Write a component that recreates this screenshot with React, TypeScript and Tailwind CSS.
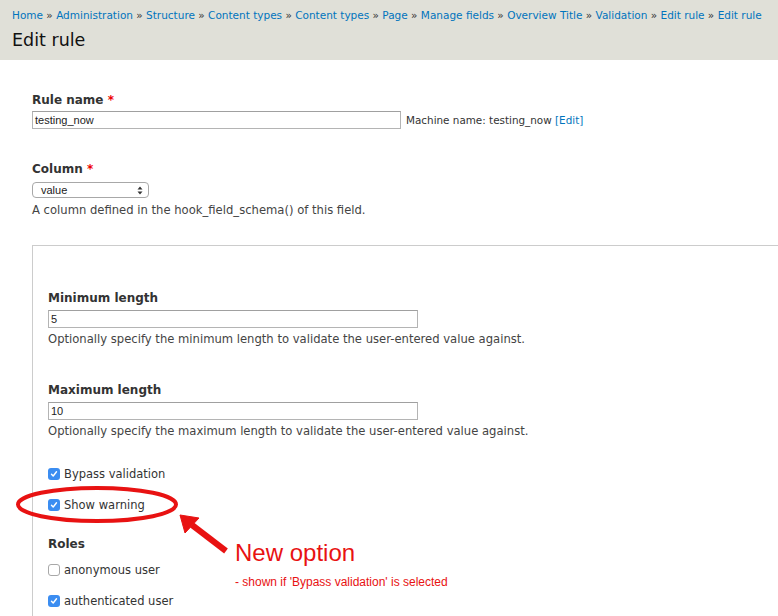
const crumbs = [
  "Home",
  "Administration",
  "Structure",
  "Content types",
  "Content types",
  "Page",
  "Manage fields",
  "Overview Title",
  "Validation",
  "Edit rule",
  "Edit rule",
];

const font = { fontFamily: '"DejaVu Sans", Verdana, sans-serif' };
const arial = { fontFamily: '"Liberation Sans", Arial, sans-serif' };

function Check({ on }: { on: boolean }) {
  if (!on) {
    return <span className="inline-block w-[12px] h-[12px] rounded-[3px] border border-[#a8a8a8] bg-white" />;
  }
  return (
    <span className="inline-flex items-center justify-center w-[12px] h-[12px] rounded-[3px] bg-[#3b8df1]">
      <svg width="8" height="8" viewBox="0 0 8 8">
        <path d="M1.5 4.2 L3.2 6 L6.5 1.8" fill="none" stroke="#fff" strokeWidth="1.4" strokeLinecap="round" strokeLinejoin="round" />
      </svg>
    </span>
  );
}

function Row({ on, label, className }: { on: boolean; label: string; className: string }) {
  return (
    <div className={`flex items-center gap-[4px] text-[11.5px] leading-[16px] text-[#333] ${className}`}>
      <Check on={on} />
      <span>{label}</span>
    </div>
  );
}

function TextField({ value, w }: { value: string; w: string }) {
  return (
    <div className={`${w} h-[18px] border border-[#b4b4b4] border-t-[#a0a0a0] bg-white text-[11px] leading-[16px] pl-[2px] text-[#222]`} style={arial}>
      {value}
    </div>
  );
}

export default function App() {
  return (
    <div className="relative w-[778px] h-[616px] overflow-hidden bg-white" style={font}>
      <div className="bg-[#e0e0d8] h-[60px] px-3 pt-[7px]">
        <div className="text-[10.5px] leading-[16px] text-[#0074bd] whitespace-nowrap">
          {crumbs.map((c, i) => (
            <span key={i}>
              {i > 0 && <span className="text-[#333]"> » </span>}
              {c}
            </span>
          ))}
        </div>
        <h1 className="text-[17.5px] leading-[24px] mt-[5px] text-[#111]">Edit rule</h1>
      </div>

      <div className="px-8 pt-[32px]">
        <div className="text-[12px] leading-[16px] font-bold text-[#333]">
          Rule name <span className="text-[#e00]">*</span>
        </div>
        <div className="flex items-center gap-[5px] mt-[3px]">
          <TextField value="testing_now" w="w-[369px]" />
          <span className="text-[10.4px] leading-[16px] text-[#333]">
            Machine name: testing_now <span className="text-[#0074bd]">[Edit]</span>
          </span>
        </div>

        <div className="text-[12px] leading-[16px] font-bold text-[#333] mt-[32px]">
          Column <span className="text-[#e00]">*</span>
        </div>
        <div className="mt-[5px] w-[117px] h-[16px] rounded-[4px] border border-[#a8a8a8] bg-white flex items-center justify-between pl-[8px] pr-[5px]" style={arial}>
          <span className="text-[11px] leading-[14px] text-[#222]">value</span>
          <svg width="6" height="9" viewBox="0 0 6 9">
            <path d="M0.5 3.5 L3 0.5 L5.5 3.5 Z M0.5 5.5 L3 8.5 L5.5 5.5 Z" fill="#333" />
          </svg>
        </div>
        <div className="text-[11.6px] leading-[16px] text-[#444] mt-[4px]">A column defined in the hook_field_schema() of this field.</div>

        <div className="mt-[27px] mr-[-40px] border-l border-t border-[#cccccc] px-[15px] pt-[44px] pb-[40px]">
          <div className="text-[12px] leading-[16px] font-bold text-[#333]">Minimum length</div>
          <div className="mt-[4px]">
            <TextField value="5" w="w-[370px]" />
          </div>
          <div className="text-[11.6px] leading-[16px] text-[#444] mt-[3px]">Optionally specify the minimum length to validate the user-entered value against.</div>

          <div className="text-[12px] leading-[16px] font-bold text-[#333] mt-[35px]">Maximum length</div>
          <div className="mt-[4px]">
            <TextField value="10" w="w-[370px]" />
          </div>
          <div className="text-[11.6px] leading-[16px] text-[#444] mt-[3px]">Optionally specify the maximum length to validate the user-entered value against.</div>

          <Row on label="Bypass validation" className="mt-[27px]" />
          <Row on label="Show warning" className="mt-[15px]" />

          <div className="text-[12px] leading-[16px] font-bold text-[#333] mt-[23px]">Roles</div>
          <Row on={false} label="anonymous user" className="mt-[10px]" />
          <Row on label="authenticated user" className="mt-[15px]" />
        </div>
      </div>

      <svg className="absolute left-0 top-0 pointer-events-none" width="778" height="616" viewBox="0 0 778 616">
        <ellipse cx="97" cy="504.5" rx="79" ry="16.5" fill="none" stroke="#e81212" strokeWidth="4" />
        <line x1="226" y1="551" x2="192" y2="525" stroke="#e81212" strokeWidth="6" />
        <polygon points="180,515 199,518 185,533" fill="#e81212" stroke="#e81212" strokeWidth="1" strokeLinejoin="round" />
      </svg>
      <div className="absolute left-[235px] top-[538px] text-[24px] leading-[30px] text-[#e81212]" style={arial}>
        New option
      </div>
      <div className="absolute left-[235px] top-[575px] text-[12px] leading-[14px] text-[#e81212]" style={arial}>
        - shown if 'Bypass validation' is selected
      </div>
    </div>
  );
}
